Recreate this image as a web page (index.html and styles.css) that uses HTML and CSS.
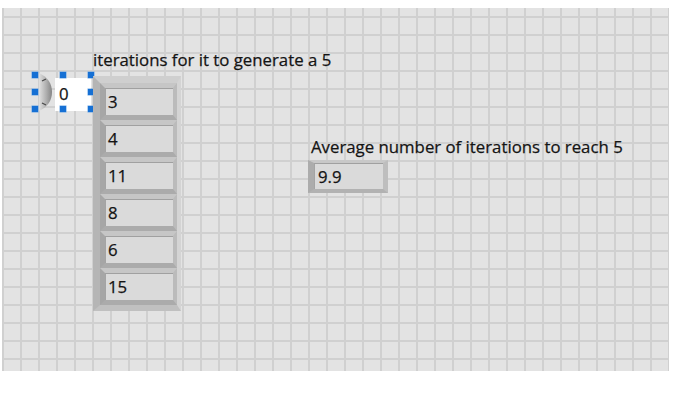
FILE: index.html
```html
<!DOCTYPE html>
<html>
<head>
<meta charset="utf-8">
<link rel="stylesheet" href="styles.css">
</head>
<body>
<div class="panel">
  <div class="label array-label">iterations for it to generate a 5</div>
  <div class="index">
    <svg class="incr" width="16" height="40" viewBox="0 0 16 40">
      <defs>
        <linearGradient id="g" x1="0" y1="0" x2="1" y2="0">
          <stop offset="0" stop-color="#e0e0e0"/>
          <stop offset="0.55" stop-color="#b0b0b0"/>
          <stop offset="1" stop-color="#858585"/>
        </linearGradient>
      </defs>
      <path d="M2 1 C11 5 15 12 15 20 C15 28 11 35 2 39 L2 1 Z" fill="url(#g)"/>
      <path d="M5 9 L9 7 M5 31 L9 33" stroke="#4a4a4a" stroke-width="1.3"/>
    </svg>
    <div class="index-box">0</div>
    <span class="h h1"></span><span class="h h2"></span><span class="h h3"></span>
    <span class="h h4"></span><span class="h h5"></span>
    <span class="h h6"></span><span class="h h7"></span><span class="h h8"></span>
  </div>
  <div class="array">
    <div class="cell"><div class="disp">3</div></div>
    <div class="cell"><div class="disp">4</div></div>
    <div class="cell"><div class="disp">11</div></div>
    <div class="cell"><div class="disp">8</div></div>
    <div class="cell"><div class="disp">6</div></div>
    <div class="cell"><div class="disp">15</div></div>
  </div>
  <div class="label avg-label">Average number of iterations to reach 5</div>
  <div class="avg"><div class="disp avg-disp">9.9</div></div>
</div>
</body>
</html>
```
FILE: styles.css
```css
html, body {
  margin: 0;
  padding: 0;
  background: #ffffff;
}
body {
  font-family: "Open Sans", "Noto Sans", sans-serif;
  color: #141414;
  -webkit-text-stroke: 0.25px #141414;
}
.panel {
  position: relative;
  width: 667px;
  height: 363px;
  margin: 8px 0 0 2px;
  background-color: #e3e3e3;
  background-image:
    linear-gradient(to right, #d0d0d0 2px, transparent 2px),
    linear-gradient(to bottom, #d0d0d0 2px, transparent 2px);
  background-size: 18px 18px;
  background-position: 0 8px;
}
.label {
  position: absolute;
  font-size: 16.8px;
  line-height: 22px;
  white-space: nowrap;
}
.array-label {
  left: 91px;
  top: 41px;
}
.avg-label {
  left: 309px;
  top: 128px;
}
.index {
  position: absolute;
  left: 30px;
  top: 63px;
  width: 62px;
  height: 41px;
}
.incr {
  position: absolute;
  left: 5px;
  top: 1px;
}
.index-box {
  position: absolute;
  left: 23px;
  top: 7px;
  width: 36px;
  height: 33px;
  background: #ffffff;
  font-size: 16.8px;
  line-height: 32px;
  padding-left: 4px;
  box-sizing: border-box;
}
.h {
  position: absolute;
  width: 6px;
  height: 6px;
  background: #1670d4;
  box-shadow: 0 0 0 0.5px #6aa6e6;
}
.h1 { left: 0; top: 1px; }
.h2 { left: 28px; top: 1px; }
.h3 { left: 56px; top: 1px; }
.h4 { left: 0; top: 18px; }
.h5 { left: 56px; top: 18px; }
.h6 { left: 0; top: 35px; }
.h7 { left: 28px; top: 35px; }
.h8 { left: 56px; top: 35px; }
.array {
  position: absolute;
  left: 91px;
  top: 68px;
  display: flex;
  flex-direction: column;
  border-style: solid;
  border-width: 7px 4px 6px 7px;
  border-color: #cfcfcf #d4d4d4 #c0c0c0 #b5b5b5;
}
.cell {
  box-sizing: border-box;
  width: 77px;
  height: 37px;
  border-style: solid;
  border-width: 5px 4px 5px 5px;
  border-color: #c6c6c6 #bbbbbb #ababab #a6a6a6;
  box-shadow: inset 0 1px 0 #a0a0a0;
}
.disp {
  box-sizing: border-box;
  height: 27px;
  background: #dadada;
  border-top: 1px solid #a0a0a0;
  border-left: 1px solid #a4a4a4;
  font-size: 16.8px;
  line-height: 26px;
  padding-left: 2px;
}
.avg {
  position: absolute;
  left: 306px;
  top: 152px;
  width: 80px;
  height: 33px;
  box-sizing: border-box;
  border-style: solid;
  border-width: 3px 5px 4px 6px;
  border-color: #c8c8c8 #bebebe #b2b2b2 #acacac;
}
.avg-disp {
  height: 26px;
  line-height: 26px;
  padding-left: 3px;
}
```
